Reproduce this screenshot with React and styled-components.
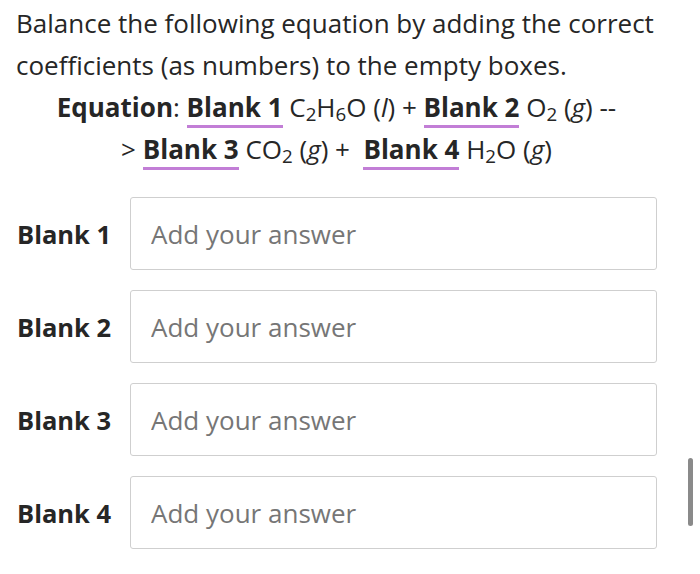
import styled, { createGlobalStyle } from 'styled-components'

const Global = createGlobalStyle`
  html, body {
    margin: 0;
    padding: 0;
    background: #fff;
  }
  body {
    font-family: "Open Sans", "Noto Sans", sans-serif;
    color: #262626;
  }
`

const Page = styled.div`
  position: relative;
  width: 700px;
  height: 574px;
  overflow: hidden;
  box-sizing: border-box;
  padding: 2px 43px 0 16px;
`

const Prompt = styled.p`
  margin: 0;
  font-size: 26px;
  line-height: 42px;
`

const Equation = styled.p`
  margin: 0;
  font-size: 26px;
  line-height: 42px;
  text-align: center;
`

const Blank = styled.span`
  font-weight: 700;
  border-bottom: 3px solid #c27ed6;
  padding-bottom: 0;
`

const Bold = styled.span`
  font-weight: 700;
`

const Sub = styled.sub`
  font-size: 0.72em;
  vertical-align: -0.2em;
  line-height: 0;
`

const Form = styled.div`
  display: flex;
  flex-direction: column;
  gap: 20px;
  margin-top: 27px;
`

const Row = styled.label`
  display: flex;
  align-items: center;
  gap: 15px;
`

const Label = styled.span`
  width: 98px;
  flex: none;
  padding-left: 1px;
  font-size: 25.5px;
  font-weight: 700;
`

const Input = styled.input`
  flex: 1;
  height: 73px;
  box-sizing: border-box;
  border: 1.5px solid #cfcfcf;
  border-radius: 3px;
  padding: 0 20px;
  font-family: "Open Sans", "Noto Sans", sans-serif;
  font-size: 26px;
  color: #262626;
  outline: none;
  &::placeholder {
    color: #767676;
  }
`

const Scrollbar = styled.div`
  position: absolute;
  right: 7px;
  top: 458px;
  width: 5px;
  height: 68px;
  border-radius: 3px;
  background: #8a8a8a;
`

const blanks = ['Blank 1', 'Blank 2', 'Blank 3', 'Blank 4']

export default function App() {
  return (
    <Page>
      <Global />
      <Prompt>
        Balance the following equation by adding the correct coefficients (as numbers) to the empty boxes.
      </Prompt>
      <Equation>
        <Bold>Equation</Bold>: <Blank>Blank 1</Blank> C<Sub>2</Sub>H<Sub>6</Sub>O (<i>l</i>) + <Blank>Blank 2</Blank> O<Sub>2</Sub> (<i>g</i>) --
        <br />
        &gt; <Blank>Blank 3</Blank> CO<Sub>2</Sub> (<i>g</i>) +&nbsp; <Blank>Blank 4</Blank> H<Sub>2</Sub>O (<i>g</i>)
      </Equation>
      <Form>
        {blanks.map((b) => (
          <Row key={b}>
            <Label>{b}</Label>
            <Input placeholder="Add your answer" />
          </Row>
        ))}
      </Form>
      <Scrollbar />
    </Page>
  )
}
